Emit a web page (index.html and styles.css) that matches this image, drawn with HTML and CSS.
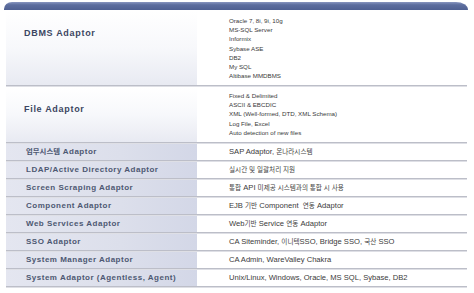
FILE: index.html
```html
<!DOCTYPE html>
<html lang="ko">
<head>
<meta charset="utf-8">
<title>Adaptor</title>
<link rel="stylesheet" href="styles.css">
</head>
<body>
<div class="page">
  <div class="bar"></div>
  <div class="table">
    <div class="row big dbms">
      <div class="name title">DBMS Adaptor</div>
      <div class="desc list">
        <div>Oracle 7, 8i, 9i, 10g</div>
        <div>MS-SQL Server</div>
        <div>Informix</div>
        <div>Sybase ASE</div>
        <div>DB2</div>
        <div>My SQL</div>
        <div>Altibase MMDBMS</div>
      </div>
    </div>
    <div class="row big file">
      <div class="name title">File Adaptor</div>
      <div class="desc list">
        <div>Fixed &amp; Delimited</div>
        <div>ASCII &amp; EBCDIC</div>
        <div>XML (Well-formed, DTD, XML Schema)</div>
        <div>Log File, Excel</div>
        <div>Auto detection of new files</div>
      </div>
    </div>
    <div class="row small">
      <div class="name"><span class="ko-name">업무시스템</span> Adaptor</div>
      <div class="desc">SAP Adaptor, <span class="ko">온나라시스템</span></div>
    </div>
    <div class="row small">
      <div class="name">LDAP/Active Directory Adaptor</div>
      <div class="desc"><span class="ko">실시간 및 일괄처리 지원</span></div>
    </div>
    <div class="row small">
      <div class="name">Screen Scraping Adaptor</div>
      <div class="desc"><span class="ko">통합</span> API <span class="ko">미제공 시스템과의 통합 시 사용</span></div>
    </div>
    <div class="row small">
      <div class="name">Component Adaptor</div>
      <div class="desc">EJB <span class="ko">기반</span> Component&nbsp; <span class="ko">연동</span> Adaptor</div>
    </div>
    <div class="row small">
      <div class="name">Web Services Adaptor</div>
      <div class="desc">Web<span class="ko">기반</span> Service <span class="ko">연동</span> Adaptor</div>
    </div>
    <div class="row small">
      <div class="name">SSO Adaptor</div>
      <div class="desc">CA Siteminder, <span class="ko">이니텍</span>SSO, Bridge SSO, <span class="ko">국산</span> SSO</div>
    </div>
    <div class="row small">
      <div class="name">System Manager Adaptor</div>
      <div class="desc">CA Admin, WareValley Chakra</div>
    </div>
    <div class="row small">
      <div class="name">System Adaptor (Agentless, Agent)</div>
      <div class="desc">Unix/Linux, Windows, Oracle, MS SQL, Sybase, DB2</div>
    </div>
  </div>
</div>
</body>
</html>
```

FILE: styles.css
```css
html, body {
  margin: 0;
  padding: 0;
  background: #ffffff;
}

.page {
  width: 474px;
  height: 293px;
  padding-top: 2px;
  box-sizing: border-box;
  font-family: "Liberation Sans", "Noto Sans CJK KR", Arial, sans-serif;
}

.bar {
  margin: 0 6px 0 4px;
  height: 8px;
  background: linear-gradient(to bottom, #8896c0 0%, #5d6e9f 35%, #4f6092 100%);
  border-top-left-radius: 8px 7px;
  border-top-right-radius: 12px 8px;
}

.table {
  margin: 1px 7px 0 6px;
}

.row {
  display: grid;
  grid-template-columns: 191px 1fr;
  border-bottom: 1px solid #bcbec8;
  box-shadow: 0 1px 0 #dedfe5;
  margin-bottom: 1px;
}

.name {
  padding-left: 20px;
  font-weight: bold;
  font-size: 8px;
  letter-spacing: 0.5px;
  color: #4d5872;
  white-space: nowrap;
}

.title {
  padding-left: 18px;
  padding-top: 16px;
  font-size: 9px;
  line-height: 12px;
  letter-spacing: 0.7px;
  color: #3c4662;
}

.ko-name {
  font-size: 7.4px;
  letter-spacing: 0;
}

.desc {
  padding-left: 32px;
  color: #3a3a3a;
  font-size: 7.6px;
  white-space: nowrap;
}

.ko {
  font-size: 6.6px;
  color: #444444;
}

.list {
  font-size: 6.2px;
  line-height: 9.2px;
}

.dbms {
  height: 74px;
}

.dbms .list {
  padding-top: 5px;
}

.file {
  height: 55px;
}

.file .list {
  padding-top: 4px;
}

.big .name {
  background: linear-gradient(to bottom, #ffffff 0%, #f7f8fb 50%, #e8eaf2 100%);
}

.small {
  height: 16px;
}

.small .name {
  line-height: 16px;
  background: linear-gradient(to right, #e4e6f0 0%, #dcdfeb 60%, #d3d7e7 100%);
}

.small .desc {
  line-height: 16px;
}
```
